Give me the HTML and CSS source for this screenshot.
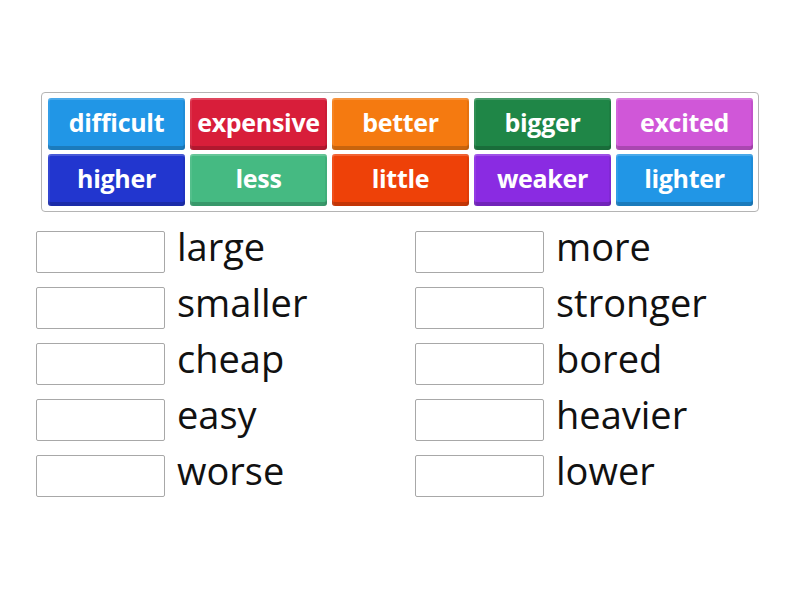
FILE: index.html
```html
<!DOCTYPE html>
<html>
<head>
<meta charset="utf-8">
<link rel="stylesheet" href="styles.css">
</head>
<body>
<div class="bank">
  <div class="tile c-blue">difficult</div>
  <div class="tile c-red">expensive</div>
  <div class="tile c-orange">better</div>
  <div class="tile c-green">bigger</div>
  <div class="tile c-pink">excited</div>
  <div class="tile c-navy">higher</div>
  <div class="tile c-mint">less</div>
  <div class="tile c-flame">little</div>
  <div class="tile c-purple">weaker</div>
  <div class="tile c-blue">lighter</div>
</div>
<div class="answers">
  <div class="col">
    <div class="row"><div class="box"></div><span class="word">large</span></div>
    <div class="row"><div class="box"></div><span class="word">smaller</span></div>
    <div class="row"><div class="box"></div><span class="word">cheap</span></div>
    <div class="row"><div class="box"></div><span class="word">easy</span></div>
    <div class="row"><div class="box"></div><span class="word">worse</span></div>
  </div>
  <div class="col">
    <div class="row"><div class="box"></div><span class="word">more</span></div>
    <div class="row"><div class="box"></div><span class="word">stronger</span></div>
    <div class="row"><div class="box"></div><span class="word">bored</span></div>
    <div class="row"><div class="box"></div><span class="word">heavier</span></div>
    <div class="row"><div class="box"></div><span class="word">lower</span></div>
  </div>
</div>
</body>
</html>
```
FILE: styles.css
```css
html, body {
  margin: 0;
  padding: 0;
  background: #ffffff;
  font-family: "Open Sans", "Liberation Sans", sans-serif;
}
.bank {
  margin: 92px 0 0 41px;
  width: 718px;
  height: 120px;
  box-sizing: border-box;
  border: 1px solid #b4b4b4;
  border-radius: 4px;
  padding: 5px 5px 0 6px;
  display: grid;
  grid-template-columns: repeat(5, 137px);
  grid-auto-rows: 52px;
  column-gap: 5px;
  row-gap: 4px;
}
.tile {
  border-radius: 3px;
  color: #ffffff;
  font-weight: 700;
  font-size: 25px;
  display: flex;
  align-items: center;
  justify-content: center;
  padding-bottom: 5px;
  box-sizing: border-box;
  box-shadow: inset 0 -4px 0 rgba(0,0,0,0.18), inset 0 2px 0 rgba(255,255,255,0.18), inset 2px 0 0 rgba(255,255,255,0.08), inset -2px 0 0 rgba(0,0,0,0.06);
  letter-spacing: -0.3px;
}
.c-blue { background: #2196e6; }
.c-red { background: #d81e3a; }
.c-orange { background: #f57a10; }
.c-green { background: #1f8647; }
.c-pink { background: #d057d8; }
.c-navy { background: #2236cf; }
.c-mint { background: #45ba82; }
.c-flame { background: #ee4108; }
.c-purple { background: #8a2be2; }
.answers {
  display: grid;
  grid-template-columns: 379px 379px;
  margin: 19px 0 0 36px;
}
.col {
  display: flex;
  flex-direction: column;
  row-gap: 14px;
}
.row {
  display: flex;
  align-items: center;
  height: 42px;
}
.box {
  width: 129px;
  height: 42px;
  box-sizing: border-box;
  border: 1px solid #a8a8a8;
  border-radius: 2px;
  background: #fff;
  flex: none;
}
.word {
  margin-left: 12px;
  font-size: 38px;
  color: #111;
  line-height: 42px;
  position: relative;
  top: -6px;
  white-space: nowrap;
}
```
